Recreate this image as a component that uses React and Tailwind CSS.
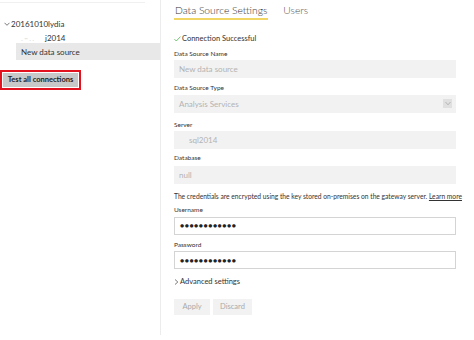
import { useState } from "react";

const Label = ({ children, className = "" }) => (
  <div className={"text-[6.5px] text-[#333] leading-none " + className}>{children}</div>
);

const ReadOnlyField = ({ children, right }) => (
  <div className="h-[18px] bg-[#f2f2f2] flex items-center justify-between pl-[5px] pr-[4px] text-[8px] text-[#b3b3b3]">
    <span>{children}</span>
    {right}
  </div>
);

const App = () => {
  const [tab, setTab] = useState("settings");

  return (
    <div
      className="w-[474px] h-[340px] bg-white flex overflow-hidden"
      style={{ fontFamily: 'Lato, "Noto Sans", sans-serif' }}
    >
      {/* left tree panel */}
      <div className="w-[161px] shrink-0 border-r border-[#ececec] mb-[5px] flex flex-col">
        <div className="h-[2px] border-t border-[#f0f0f0] w-[145px] mt-[2px]" />
        <div className="mt-[14px] pl-[4px] flex items-center gap-[1px] text-[8px] text-[#333] leading-none h-[12px]">
          <svg width="6" height="6" viewBox="0 0 6 6" fill="none" stroke="#555" strokeWidth="0.8">
            <path d="M0.5 1.8 L3 4.3 L5.5 1.8" />
          </svg>
          <span>20161010lydia</span>
        </div>
        <div className="mt-[3px] pl-[21px] h-[10px] flex items-center text-[8px] text-[#333] leading-none">
          <span className="text-[#dcdcdc] w-[24px] tracking-tighter">.  ··  . .</span>
          <span>j2014</span>
        </div>
        <div className="ml-[16px] h-[17px] bg-[#e8e8e8] flex items-center pl-[5px] text-[8px] text-[#333]">
          New data source
        </div>
        <div className="mt-[10px] w-[81px] h-[20px] border-2 border-[#e3121f] p-[1px] flex">
          <button className="flex-1 bg-[#c8c8c8] text-[7.5px] font-bold text-[#222] leading-none">
            Test all connections
          </button>
        </div>
      </div>

      {/* right settings panel */}
      <div className="flex-1 min-w-0 pl-[13px] pr-[18px] flex flex-col">
        <div className="flex gap-[15px] mt-[3px] h-[18px] items-start">
          <button
            onClick={() => setTab("settings")}
            className={
              "text-[10.3px] font-light text-[#333] pb-[1px] px-[1px] leading-[14px] border-b-2 " +
              (tab === "settings" ? "border-[#f2d663]" : "border-transparent")
            }
          >
            Data Source Settings
          </button>
          <button
            onClick={() => setTab("users")}
            className={
              "text-[10.3px] font-light text-[#555] leading-[14px] border-b-2 " +
              (tab === "users" ? "border-[#f2d663]" : "border-transparent")
            }
          >
            Users
          </button>
        </div>

        <div className="mt-[14px] flex items-center gap-[1px] text-[7.5px] text-[#333] leading-none">
          <svg width="7" height="6" viewBox="0 0 7 6" fill="none" stroke="#4caf50" strokeWidth="0.8">
            <path d="M0.5 3.2 L2.3 5 L6.5 0.6" />
          </svg>
          <span>Connection Successful</span>
        </div>

        <Label className="mt-[8px] mb-[3px]">Data Source Name</Label>
        <ReadOnlyField>New data source</ReadOnlyField>

        <Label className="mt-[7px] mb-[3px]">Data Source Type</Label>
        <ReadOnlyField
          right={
            <span className="w-[9px] h-[9px] bg-[#e0e0e0] flex items-center justify-center">
              <svg width="6" height="5" viewBox="0 0 6 5" fill="none" stroke="#aaa" strokeWidth="0.8">
                <path d="M0.5 1 L3 3.8 L5.5 1" />
              </svg>
            </span>
          }
        >
          Analysis Services
        </ReadOnlyField>

        <Label className="mt-[9px] mb-[3px]">Server</Label>
        <ReadOnlyField>
          <span className="pl-[10px]">sql2014</span>
        </ReadOnlyField>

        <Label className="mt-[6px] mb-[4px]">Database</Label>
        <ReadOnlyField>null</ReadOnlyField>

        <div className="mt-[9px] text-[6.7px] text-[#333] whitespace-nowrap leading-none">
          The credentials are encrypted using the key stored on-premises on the gateway server.{" "}
          <a className="underline">Learn more</a>
        </div>

        <Label className="mt-[8px] mb-[3px]">Username</Label>
        <div className="h-[18px] border border-[#d4d4d4] flex items-center pl-[5px] text-[7px] tracking-[0.5px] text-[#222]">
          ●●●●●●●●●●●●
        </div>

        <Label className="mt-[7px] mb-[3px]">Password</Label>
        <div className="h-[18px] border border-[#d4d4d4] flex items-center pl-[5px] text-[7px] tracking-[0.5px] text-[#222]">
          ●●●●●●●●●●●●
        </div>

        <div className="mt-[9px] flex items-center gap-[1px] text-[7.5px] text-[#333] leading-none">
          <svg width="5" height="6" viewBox="0 0 5 6" fill="none" stroke="#555" strokeWidth="0.8">
            <path d="M1 0.5 L3.8 3 L1 5.5" />
          </svg>
          <span>Advanced settings</span>
        </div>

        <div className="mt-[13px] flex gap-[3px]">
          <button className="w-[36px] h-[16px] bg-[#f2f2f2] text-[7.5px] text-[#aaa]">Apply</button>
          <button className="w-[39px] h-[16px] bg-[#f2f2f2] text-[7.5px] text-[#aaa]">Discard</button>
        </div>
      </div>
    </div>
  );
};

export default App;
